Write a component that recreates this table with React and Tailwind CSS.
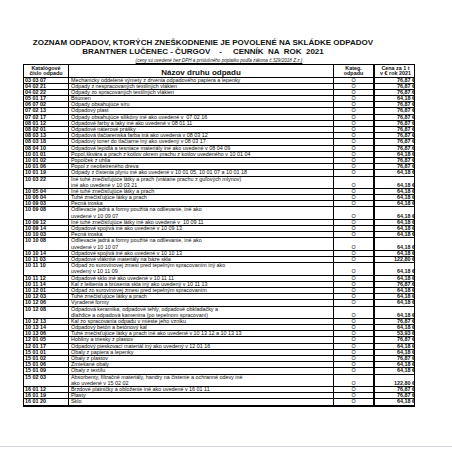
const rows = [
  ["03 03 07", "Mechanicky oddelené výmety z drvenia odpadového papiera a lepenky", "76,87"],
  ["04 02 21", "Odpady z nespracovaných textilných vlákien", "76,87"],
  ["04 02 22", "Odpady zo spracovaných textilných vlákien", "76,87"],
  ["05 01 17", "Bitúmen", "64,18"],
  ["06 07 02", "Odpady obsahujúce síru", "76,87"],
  ["07 02 13", "Odpadový plast", "76,87"],
  ["07 02 17", "Odpady obsahujúce silikóny iné ako uvedené v  07 02 16", "76,87"],
  ["08 01 12", "Odpadové farby a laky iné ako uvedené v 08 01 11", "76,87"],
  ["08 02 01", "Odpadové náterové prášky", "76,87"],
  ["08 03 13", "Odpadová tlačiarenská farba iná ako uvedená v 08 03 12", "76,87"],
  ["08 03 18", "Odpadový toner do tlačiarne iný ako uvedený v 08 03 17", "76,87"],
  ["08 04 10", "Odpadové lepidlá a tesniace materiály iné ako uvedené v 08 04 09", "76,87"],
  ["10 01 01", "Popol,škvára a prach z kotlov okrem prachu z kotlov uvedeného v 10 01 04", "64,18"],
  ["10 01 02", "Popolček z uhlia", "76,87"],
  ["10 01 06", "Popol z neošetreného dreva", "76,87"],
  ["10 01 19", "Odpady z čistenia plynu iné ako uvedené v 10 01 05, 10 01 07 a 10 01 18", "64,18"],
  ["10 03 22", "Iné tuhé znečisťujúce látky a prach (vrátane prachu z guľových mlynov)", "64,18", "iné ako uvedené v 10 03 21"],
  ["10 05 04", "Iné tuhé znečisťujúce látky a prach", "64,18"],
  ["10 06 04", "Tuhé znečisťujúce látky a prach", "64,18"],
  ["10 09 03", "Pecná troska", "64,18"],
  ["10 09 08", "Odlievacie jadrá a formy použitá na odlievanie, iné ako", "64,18", "uvedené v 10 09 07"],
  ["10 09 12", "Iné tuhé znečisťujúce látky iné ako uvedené v  10 09 11", "64,18"],
  ["10 09 14", "Odpadové spojivá iné ako uvedené v 10 09 13", "64,18"],
  ["10 10 03", "Pecná troska", "64,18"],
  ["10 10 08", "Odlievacie jadrá a formy použité na odlievanie, iné ako", "64,18", "uvedené v 10 10 07"],
  ["10 10 14", "Odpadové spojivá iné ako uvedené v 10 10 13", "64,18"],
  ["10 11 03", "Odpadové vláknité materiály na báze skla", "122,80"],
  ["10 11 10", "Odpad zo surovinovej zmesi pred tepelným spracovaním iný ako", "64,18", "uvedený v 10 11 09"],
  ["10 11 12", "Odpadové sklo iné ako uvedené v 10 11 11", "64,18"],
  ["10 11 14", "Kal z leštenia a brúsenia skla iný ako uvedený v 10 11 13", "76,87"],
  ["10 12 01", "Odpad zo surovinovej zmesi pred tepelným spracovaním", "64,18"],
  ["10 12 03", "Tuhé znečisťujúce látky a prach", "64,18"],
  ["10 12 06", "Vyradené formy", "64,18"],
  ["10 12 08", "Odpadová keramika, odpadové tehly, odpadové obkladačky a", "64,18", "dlaždice a odpadová kamenina (po tepelnom spracovaní)"],
  ["10 12 13", "Kal zo spracovania odpadu v mieste jeho vzniku", "76,87"],
  ["10 13 14", "Odpadový betón a betónový kal", "64,18"],
  ["10 13 06", "Tuhé znečisťujúce látky a prach iné ako uvedené v 10 13 12 a 10 13 13", "53,93"],
  ["12 01 05", "Hobliny a triesky z plastov", "76,87"],
  ["12 01 17", "Odpadový pieskovací materiál iný ako uvedený v 12 01 16", "64,18"],
  ["15 01 01", "Obaly z papiera a lepenky", "64,18"],
  ["15 01 02", "Obaly z plastov", "76,87"],
  ["15 01 06", "Zmiešané obaly", "64,18"],
  ["15 01 09", "Obaly z textílu", "64,18"],
  ["15 02 03", "Absorbenty, filtračné materiály, handry na čistenie a ochranné odevy iné", "122,80", "ako uvedené v 15 02 02"],
  ["16 01 12", "Brzdové platničky a obloženie iné ako uvedené v 16 01 11", "76,87"],
  ["16 01 19", "Plasty", "76,87"],
  ["16 01 20", "Sklo", "64,18"],
];

function Row({ r }) {
  const [code, name, price, second] = r;
  if (second) {
    return (
      <div className="grid grid-cols-[45px_265px_41px_41px] border-b border-black h-[12.4px] leading-[5.6px]">
        <div className="border-r border-black font-bold pl-px">{code}</div>
        <div className="border-r border-black pl-[2px] flex flex-col">
          <div className="h-[6.2px] whitespace-pre">{name}</div>
          <div className="whitespace-pre">{second}</div>
        </div>
        <div className="border-r-2 border-black flex flex-col">
          <div className="h-[6.2px]"></div>
          <div className="text-center">O</div>
        </div>
        <div className="flex flex-col">
          <div className="h-[6.2px]"></div>
          <div className="text-right font-bold pr-px">{price} €</div>
        </div>
      </div>
    );
  }
  return (
    <div className="grid grid-cols-[45px_265px_41px_41px] border-b border-black h-[6.2px] leading-[5.4px]">
      <div className="border-r border-black font-bold pl-px">{code}</div>
      <div className="border-r border-black pl-[2px] whitespace-pre overflow-hidden">{name}</div>
      <div className="border-r-2 border-black text-center">O</div>
      <div className="text-right font-bold pr-px">{price} €</div>
    </div>
  );
}

export default function App() {
  return (
    <div className="w-[452px] h-[452px] bg-white overflow-hidden font-['Liberation_Sans',Arial,sans-serif] text-[#111]">
      <div className="pt-[38px] pl-[23px]">
        <div className="w-[392px] pr-[32px] text-center font-bold text-[8px] leading-[9px]">
          <div className="whitespace-nowrap">ZOZNAM ODPADOV, KTORÝCH ZNEŠKODNENIE JE POVOLENÉ NA SKLÁDKE ODPADOV</div>
          <div className="whitespace-pre">BRANTNER LUČENEC - ČURGOV    -     CENNÍK  NA  ROK  2021</div>
        </div>
        <div className="w-[392px] text-center italic underline text-[4.6px] leading-[6px] mt-[2px]">
          (ceny sú uvedené bez DPH a príslušného poplatku podľa zákona č.329/2018 Z.z.)
        </div>
        <div className="w-[392px] border border-black text-[5.4px]">
          <div className="grid grid-cols-[45px_265px_41px_41px] border-b border-black h-[12.5px]">
            <div className="border-r border-black font-bold text-center leading-[5.6px] pt-[0.5px]">
              <div>Katalógové</div>
              <div>číslo odpadu</div>
            </div>
            <div className="border-r border-black font-bold text-center text-[8px] leading-[8px] pt-[3.5px]">
              Názov druhu odpadu
            </div>
            <div className="border-r-2 border-black font-bold text-center leading-[5.6px] pt-[0.5px]">
              <div>Kateg.</div>
              <div>odpadu</div>
            </div>
            <div className="font-bold text-center leading-[5.6px] pt-[0.5px]">
              <div>Cena za 1 t</div>
              <div>v € rok 2021</div>
            </div>
          </div>
          {rows.map((r, i) => (
            <Row key={i} r={r} />
          ))}
        </div>
      </div>
      <div className="mt-[39px] h-px bg-gray-300"></div>
    </div>
  );
}
